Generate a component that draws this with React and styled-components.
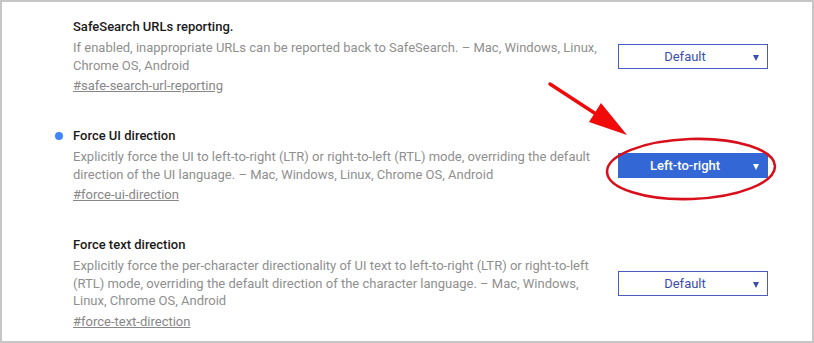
import React from "react";
import styled, { createGlobalStyle } from "styled-components";

const GlobalStyle = createGlobalStyle`
  html, body {
    margin: 0;
    padding: 0;
    background: #ffffff;
  }
  body {
    font-family: Roboto, "Liberation Sans", Arial, sans-serif;
  }
`;

const Frame = styled.div`
  position: relative;
  width: 814px;
  height: 343px;
  box-sizing: border-box;
  border: 2px solid #c6c6c6;
  background: #fff;
  overflow: hidden;
`;

const List = styled.div`
  display: flex;
  flex-direction: column;
  padding-top: 16px;
  gap: 32px;
`;

const Experiment = styled.div`
  display: flex;
  align-items: center;
  gap: 18px;
  padding: 0 44px 0 71px;
`;

const Info = styled.div`
  flex: 1;
  display: flex;
  flex-direction: column;
`;

const Title = styled.h3`
  position: relative;
  margin: 0;
  font-size: 13px;
  line-height: 18px;
  font-weight: 500;
  color: #1a1a1a;
`;

const Dot = styled.span`
  position: absolute;
  left: -18px;
  top: 5px;
  width: 8px;
  height: 8px;
  border-radius: 50%;
  background: #4285f4;
`;

const Description = styled.p`
  margin: 3px 0 0;
  font-size: 13px;
  line-height: 17.5px;
  color: #8f8f8f;
`;

const Permalink = styled.a`
  margin-top: 3px;
  font-size: 13px;
  line-height: 18px;
  color: #878787;
  text-decoration: underline;
  align-self: flex-start;
`;

const Select = styled.div`
  position: relative;
  flex: 0 0 150px;
  height: 25px;
  box-sizing: border-box;
  display: flex;
  align-items: center;
  justify-content: center;
  padding-right: 16px;
  border: 1px solid ${(p) => (p.active ? "#3367d6" : "#4a5cbf")};
  background: ${(p) => (p.active ? "#3367d6" : "#fff")};
  color: ${(p) => (p.active ? "#fff" : "#3b4eb0")};
  font-size: 13px;
  font-weight: ${(p) => (p.active ? 500 : 400)};
`;

const Caret = styled.span`
  position: absolute;
  right: 8px;
  top: 10px;
  width: 0;
  height: 0;
  border-left: 3px solid transparent;
  border-right: 3px solid transparent;
  border-top: 6px solid currentColor;
`;

const Annotation = styled.svg`
  position: absolute;
  left: 0;
  top: 0;
  pointer-events: none;
`;

const experiments = [
  {
    title: "SafeSearch URLs reporting.",
    text: "If enabled, inappropriate URLs can be reported back to SafeSearch. – Mac, Windows, Linux, Chrome OS, Android",
    link: "#safe-search-url-reporting",
    value: "Default",
  },
  {
    title: "Force UI direction",
    text: "Explicitly force the UI to left-to-right (LTR) or right-to-left (RTL) mode, overriding the default direction of the UI language. – Mac, Windows, Linux, Chrome OS, Android",
    link: "#force-ui-direction",
    value: "Left-to-right",
    active: true,
  },
  {
    title: "Force text direction",
    text: "Explicitly force the per-character directionality of UI text to left-to-right (LTR) or right-to-left (RTL) mode, overriding the default direction of the character language. – Mac, Windows, Linux, Chrome OS, Android",
    link: "#force-text-direction",
    value: "Default",
  },
];

export default function App() {
  return (
    <>
      <GlobalStyle />
      <Frame>
        <List>
          {experiments.map((exp) => (
            <Experiment key={exp.link}>
              <Info>
                <Title>
                  {exp.active && <Dot />}
                  {exp.title}
                </Title>
                <Description>{exp.text}</Description>
                <Permalink href={exp.link}>{exp.link}</Permalink>
              </Info>
              <Select active={exp.active}>
                {exp.value}
                <Caret />
              </Select>
            </Experiment>
          ))}
        </List>
        {/* red markup drawn over the screenshot */}
        <Annotation width="814" height="343" viewBox="-2 -2 814 343">
          <line x1="546" y1="80" x2="592" y2="110" stroke="#f00a0a" strokeWidth="3.5" strokeLinecap="round" />
          <polygon points="597,99 585,118 623,131" fill="#f00a0a" />
          <ellipse
            cx="687"
            cy="165"
            rx="84"
            ry="30"
            fill="none"
            stroke="#d8101c"
            strokeWidth="2.6"
            transform="rotate(-2 687 165)"
          />
        </Annotation>
      </Frame>
    </>
  );
}
